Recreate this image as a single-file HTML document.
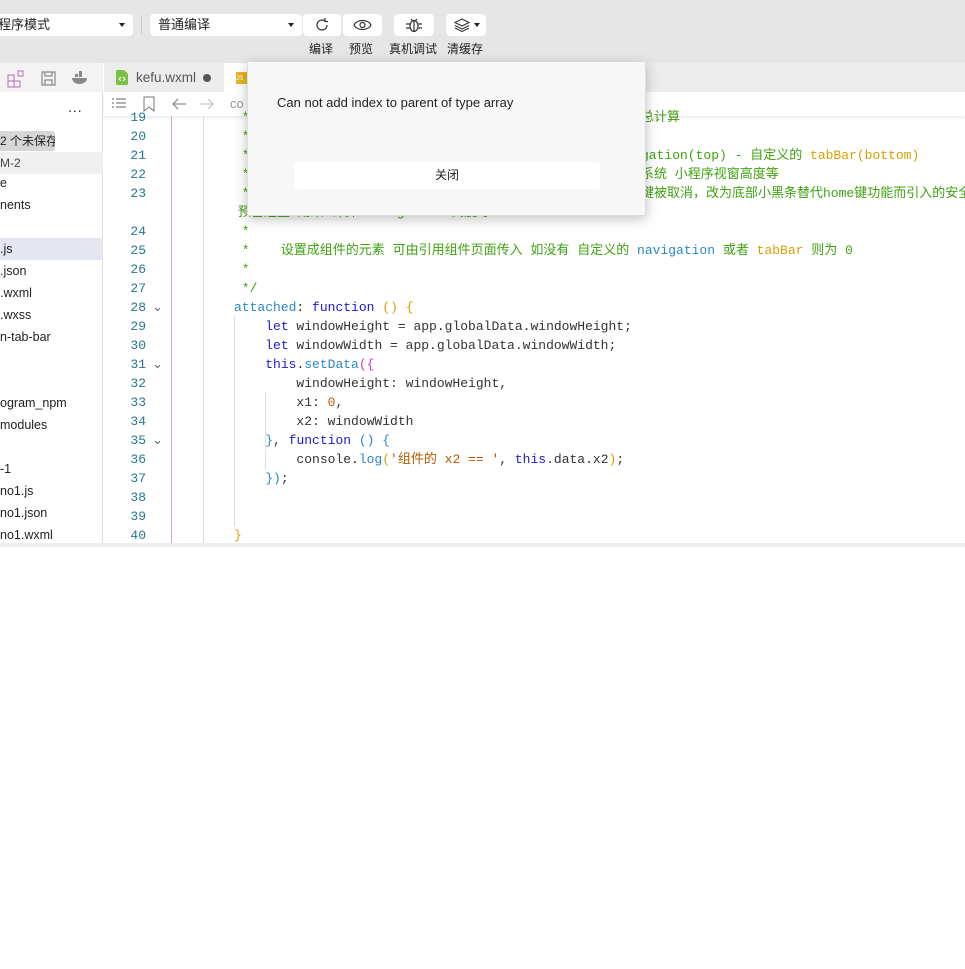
<!DOCTYPE html>
<html><head><meta charset="utf-8"><style>
*{margin:0;padding:0;box-sizing:border-box}
body{width:965px;height:547px;overflow:hidden;background:#fff;font-family:"Liberation Sans","Noto Sans CJK SC",sans-serif;position:relative;font-size:13px;color:#222}
.abs{position:absolute}
.top{left:0;top:0;width:965px;height:63px;background:#e6e6e6}
.dd{background:#fff;border-radius:4px;height:22px;top:14px;font-size:13px;line-height:22px;padding-left:8px}
.caret{position:absolute;right:8px;top:9px;border-left:3px solid transparent;border-right:3px solid transparent;border-top:4px solid #222}
.btn{background:#fff;top:14px;height:22px;border-radius:4px}
.lbl{top:40px;font-size:12px}
.side{left:0;top:63px;width:103px;height:484px;background:#fff;border-right:1px solid #ddd}
.side div.f{position:absolute;left:0;font-size:12.5px;color:#222;white-space:nowrap}
.mono{font-family:"Liberation Mono","Noto Sans CJK SC",monospace;font-size:13px;white-space:pre;line-height:19px}
.mono div{height:19px;line-height:19px;white-space:pre}
.ln{position:absolute;width:146px;left:0;text-align:right;color:#237893}
.cl{position:absolute;left:234px}
.c{color:#3fa10f}.k{color:#1a1ad0}.b{color:#2a86c9}.y{color:#d8a000}.o{color:#b45a00}.t{color:#333}.p{color:#c040c0}
</style></head><body>
<div class="abs top"></div>
<div class="abs dd" style="left:-10px;width:143px">程序模式<span class="caret"></span></div>
<div class="abs" style="left:141px;top:16px;width:1px;height:18px;background:#ccc"></div>
<div class="abs dd" style="left:150px;width:152px">普通编译<span class="caret"></span></div>
<div class="abs btn" style="left:303px;width:38px"><svg class="abs" style="left:11px;top:3px" width="16" height="16" viewBox="0 0 16 16"><path d="M13 8a5 5 0 1 1-2-4" fill="none" stroke="#333" stroke-width="1.2"/><path d="M11 1v3.5h3" fill="none" stroke="#333" stroke-width="1.2"/></svg></div>
<div class="abs btn" style="left:343px;width:39px"><svg class="abs" style="left:10px;top:4px" width="19" height="14" viewBox="0 0 19 14"><path d="M1 7c3-6 14-6 17 0c-3 6-14 6-17 0z" fill="none" stroke="#333" stroke-width="1.2"/><circle cx="9.5" cy="7" r="2.5" fill="none" stroke="#333" stroke-width="1.2"/></svg></div>
<div class="abs btn" style="left:394px;width:40px"><svg class="abs" style="left:11px;top:3px" width="18" height="16" viewBox="0 0 18 16"><ellipse cx="9" cy="9" rx="4" ry="5.5" fill="none" stroke="#333" stroke-width="1.2"/><path d="M5 7H1M5 11H1M13 7h4M13 11h4M9 4v11M6 2l2 2M12 2l-2 2" stroke="#333" stroke-width="1.2"/></svg></div>
<div class="abs btn" style="left:446px;width:40px"><svg class="abs" style="left:8px;top:4px" width="16" height="14" viewBox="0 0 16 14"><path d="M8 1l7 3.5-7 3.5-7-3.5z M1 7.5l7 3.5 7-3.5 M1 10l7 3.5 7-3.5" fill="none" stroke="#333" stroke-width="1.1"/></svg><span class="caret" style="right:6px"></span></div>
<div class="abs lbl" style="left:309px">编译</div>
<div class="abs lbl" style="left:349px">预览</div>
<div class="abs lbl" style="left:389px">真机调试</div>
<div class="abs lbl" style="left:447px">清缓存</div>

<div class="abs side">
 <div class="abs" style="left:0;top:0;width:103px;height:29px;background:#f3f3f3"></div>
 <svg class="abs" style="left:7px;top:7px" width="18" height="18" viewBox="0 0 18 18"><rect x="1" y="5" width="6" height="6" fill="none" stroke="#b36fb3"/><rect x="1" y="11" width="6" height="6" fill="none" stroke="#b36fb3"/><rect x="7" y="11" width="6" height="6" fill="none" stroke="#b36fb3"/><rect x="11" y="1" width="5" height="5" fill="none" stroke="#b36fb3"/></svg>
 <svg class="abs" style="left:41px;top:8px" width="15" height="15" viewBox="0 0 15 15"><path d="M1 1h13v13H1z M4 1v4h7V1 M4 14V9h7v5" fill="none" stroke="#888" stroke-width="1.2"/></svg>
 <svg class="abs" style="left:71px;top:8px" width="18" height="14" viewBox="0 0 18 14"><path d="M1 7h15c0 4-4 6-8 6S1 10 1 7z M4 6V3h3v3M8 6V3h3v3M8 3V0h3v3" fill="#888"/></svg>
 <div class="abs" style="left:68px;top:36px;font-size:14px;letter-spacing:1px">...</div>
 <div class="abs" style="left:0;top:68px;width:55px;height:20px;background:#d6d6d6;border-radius:0 3px 3px 0;font-size:12px;line-height:20px;white-space:nowrap;overflow:hidden">2 个未保存</div>
 <div class="abs" style="left:0;top:89px;width:103px;height:22px;background:#f0f0f0;font-size:12px;line-height:22px;color:#444">M-2</div>
 <div class="abs" style="left:0;top:175px;width:103px;height:22px;background:#e4e6f1"></div>
 <div class="f" style="top:113px">e</div>
 <div class="f" style="top:135px">nents</div>
 <div class="f" style="top:179px">.js</div>
 <div class="f" style="top:201px">.json</div>
 <div class="f" style="top:223px">.wxml</div>
 <div class="f" style="top:245px">.wxss</div>
 <div class="f" style="top:267px">n-tab-bar</div>
 <div class="f" style="top:333px">ogram_npm</div>
 <div class="f" style="top:355px">modules</div>
 <div class="f" style="top:399px">-1</div>
 <div class="f" style="top:421px">no1.js</div>
 <div class="f" style="top:443px">no1.json</div>
 <div class="f" style="top:465px">no1.wxml</div>
</div>

<div class="abs" style="left:104px;top:63px;width:861px;height:29px;background:#ececec"></div>
<svg class="abs" style="left:116px;top:70px" width="12" height="15" viewBox="0 0 12 15"><path d="M0 1.5Q0 0 1.5 0H8l4 4v9.5Q12 15 10.5 15h-9Q0 15 0 13.5z" fill="#7ac143"/><path d="M5 7l-2 2 2 2M7 7l2 2-2 2" stroke="#fff" fill="none"/></svg>
<div class="abs" style="left:136px;top:70px;font-size:13.5px;color:#555">kefu.wxml</div>
<div class="abs" style="left:203px;top:74px;width:8px;height:8px;border-radius:4px;background:#555"></div>
<div class="abs" style="left:224px;top:63px;width:30px;height:29px;background:#fff"></div>
<div class="abs" style="left:236px;top:72px;width:12px;height:12px;background:#e8b422;font-size:6px;color:#fff;line-height:14px">JS</div>
<div class="abs" style="left:104px;top:92px;width:861px;height:24px;background:#fff;box-shadow:0 2px 3px rgba(0,0,0,.08)"></div>
<svg class="abs" style="left:111px;top:97px" width="16" height="14" viewBox="0 0 16 14"><path d="M1 2h2M5 2h10M1 6h2M5 6h10M1 10h2M5 10h10" stroke="#666"/></svg>
<svg class="abs" style="left:143px;top:96px" width="12" height="16" viewBox="0 0 12 16"><path d="M1 1h10v14l-5-4-5 4z" fill="none" stroke="#777"/></svg>
<svg class="abs" style="left:171px;top:97px" width="16" height="14" viewBox="0 0 16 14"><path d="M15 7H2M7 2L2 7l5 5" fill="none" stroke="#777"/></svg>
<svg class="abs" style="left:199px;top:97px" width="16" height="14" viewBox="0 0 16 14"><path d="M1 7h13M9 2l5 5-5 5" fill="none" stroke="#bbb"/></svg>
<div class="abs" style="left:230px;top:96px;color:#999;font-size:13px">co</div>

<div class="abs" style="left:171px;top:116px;width:1px;height:431px;background:#d9a6d9"></div>
<div class="abs" style="left:203px;top:116px;width:1px;height:431px;background:#ddd"></div>
<div class="abs" style="left:234px;top:316px;width:1px;height:210px;background:#ddd"></div>
<div class="abs" style="left:265px;top:392px;width:1px;height:57px;background:#ddd"></div>
<div class="abs" style="left:265px;top:450px;width:1px;height:19px;background:#ddd"></div>
<div class="abs" style="left:0;top:543px;width:965px;height:4px;background:#eee"></div>

<div class="mono">
<div class="ln" style="top:108px">19</div>
<div class="ln" style="top:127px">20</div>
<div class="ln" style="top:146px">21</div>
<div class="ln" style="top:165px">22</div>
<div class="ln" style="top:184px">23</div>
<div class="ln" style="top:222px">24</div>
<div class="ln" style="top:241px">25</div>
<div class="ln" style="top:260px">26</div>
<div class="ln" style="top:279px">27</div>
<div class="ln" style="top:298px">28</div>
<div class="ln" style="top:317px">29</div>
<div class="ln" style="top:336px">30</div>
<div class="ln" style="top:355px">31</div>
<div class="ln" style="top:374px">32</div>
<div class="ln" style="top:393px">33</div>
<div class="ln" style="top:412px">34</div>
<div class="ln" style="top:431px">35</div>
<div class="ln" style="top:450px">36</div>
<div class="ln" style="top:469px">37</div>
<div class="ln" style="top:488px">38</div>
<div class="ln" style="top:507px">39</div>
<div class="ln" style="top:526px">40</div>
<div class="abs" style="left:152px;top:298px;color:#666">⌄</div>
<div class="abs" style="left:152px;top:355px;color:#666">⌄</div>
<div class="abs" style="left:152px;top:431px;color:#666">⌄</div>
<div class="cl c" style="top:108px"> *</div>
<div class="cl c" style="top:108px;left:641px">总计算</div>
<div class="cl c" style="top:127px"> *</div>
<div class="cl c" style="top:146px"> *</div>
<div class="cl c" style="top:146px;left:641px">gation(top) - 自定义的 <span class="y">tabBar(bottom)</span></div>
<div class="cl c" style="top:165px"> *</div>
<div class="cl c" style="top:165px;left:641px">系统 小程序视窗高度等</div>
<div class="cl c" style="top:184px"> *</div>
<div class="cl c" style="top:184px;left:641px">键被取消，改为底部小黑条替代home键功能而引入的安全区域</div>
<div class="cl c" style="top:203px;left:238px">预留这里 用来 计算 navigation 高度等</div>
<div class="cl c" style="top:222px"> *</div>
<div class="cl c" style="top:241px"> *    设置成组件的元素 可由引用组件页面传入 如没有 自定义的 <span class="b">navigation</span> 或者 <span class="y">tabBar</span> 则为 0</div>
<div class="cl c" style="top:260px"> *</div>
<div class="cl c" style="top:279px"> */</div>
<div class="cl" style="top:298px"><span class="b">attached</span><span class="t">:</span> <span class="k">function</span> <span class="y">()</span> <span class="y">{</span></div>
<div class="cl t" style="top:317px">    <span class="k">let</span> windowHeight = app.globalData.windowHeight;</div>
<div class="cl t" style="top:336px">    <span class="k">let</span> windowWidth = app.globalData.windowWidth;</div>
<div class="cl t" style="top:355px">    <span class="k">this</span>.<span class="b">setData</span><span class="p">({</span></div>
<div class="cl t" style="top:374px">        windowHeight: windowHeight,</div>
<div class="cl t" style="top:393px">        x1: <span class="o">0</span>,</div>
<div class="cl t" style="top:412px">        x2: windowWidth</div>
<div class="cl t" style="top:431px">    <span class="b">}</span>, <span class="k">function</span> <span class="b">()</span> <span class="b">{</span></div>
<div class="cl t" style="top:450px">        console.<span class="b">log</span><span class="y">(</span><span class="o">'组件的 x2 == '</span>, <span class="k">this</span>.data.x2<span class="y">)</span>;</div>
<div class="cl t" style="top:469px">    <span class="b">})</span>;</div>
<div class="cl y" style="top:526px">}</div>
</div>

<div class="abs" style="left:247px;top:62px;width:399px;height:154px;background:#f7f7f7;box-shadow:0 3px 12px rgba(0,0,0,.25);border:1px solid #ddd;border-top:none"></div>
<div class="abs" style="left:277px;top:95px;font-size:13px;color:#222">Can not add index to parent of type array</div>
<div class="abs" style="left:294px;top:162px;width:306px;height:27px;background:#fff;border-radius:3px;text-align:center;line-height:27px;font-size:12px">关闭</div>
</body></html>
